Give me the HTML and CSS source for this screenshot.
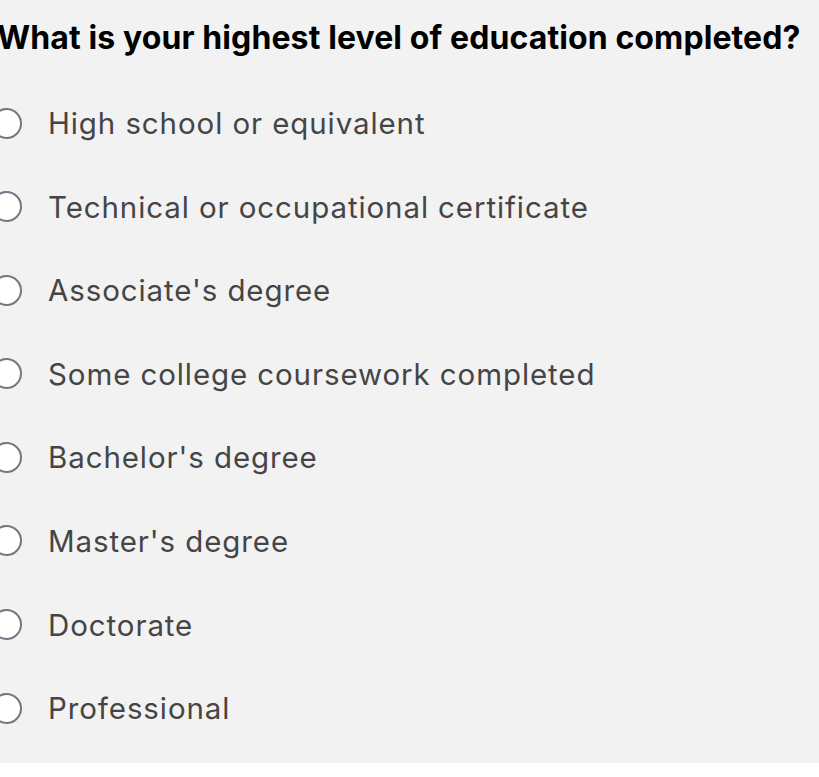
FILE: index.html
```html
<!DOCTYPE html>
<html>
<head>
<meta charset="utf-8">
<link rel="stylesheet" href="styles.css">
</head>
<body>
<main class="page">
  <h1 class="question">What is your highest level of education completed?</h1>
  <div class="options">
    <label class="option"><span class="radio"></span><span class="label">High school or equivalent</span></label>
    <label class="option"><span class="radio"></span><span class="label">Technical or occupational certificate</span></label>
    <label class="option"><span class="radio"></span><span class="label">Associate's degree</span></label>
    <label class="option"><span class="radio"></span><span class="label">Some college coursework completed</span></label>
    <label class="option"><span class="radio"></span><span class="label">Bachelor's degree</span></label>
    <label class="option"><span class="radio"></span><span class="label">Master's degree</span></label>
    <label class="option"><span class="radio"></span><span class="label">Doctorate</span></label>
    <label class="option"><span class="radio"></span><span class="label">Professional</span></label>
  </div>
</main>
</body>
</html>
```
FILE: styles.css
```css
html {
  background: #ffffff;
}
body {
  margin: 0;
  font-family: Inter, "Liberation Sans", Arial, sans-serif;
  overflow: hidden;
}
.page {
  background: #f2f2f2;
  height: 763px;
  padding-top: 18px;
  box-sizing: border-box;
}
.question {
  margin: 0 0 0 -3px;
  font-size: 32px;
  line-height: 40px;
  font-weight: 700;
  letter-spacing: 0.1px;
  color: #000;
  white-space: nowrap;
}
.options {
  display: flex;
  flex-direction: column;
  gap: 49.6px;
  margin-top: 48px;
  margin-left: -9px;
}
.option {
  display: flex;
  align-items: center;
  height: 34px;
  gap: 26px;
}
.radio {
  width: 31px;
  height: 31px;
  box-sizing: border-box;
  border: 2px solid #727782;
  border-radius: 50%;
  background: #fff;
  flex: none;
}
.label {
  font-size: 29.5px;
  line-height: 34px;
  letter-spacing: 0.9px;
  color: #454545;
  white-space: nowrap;
}
```
